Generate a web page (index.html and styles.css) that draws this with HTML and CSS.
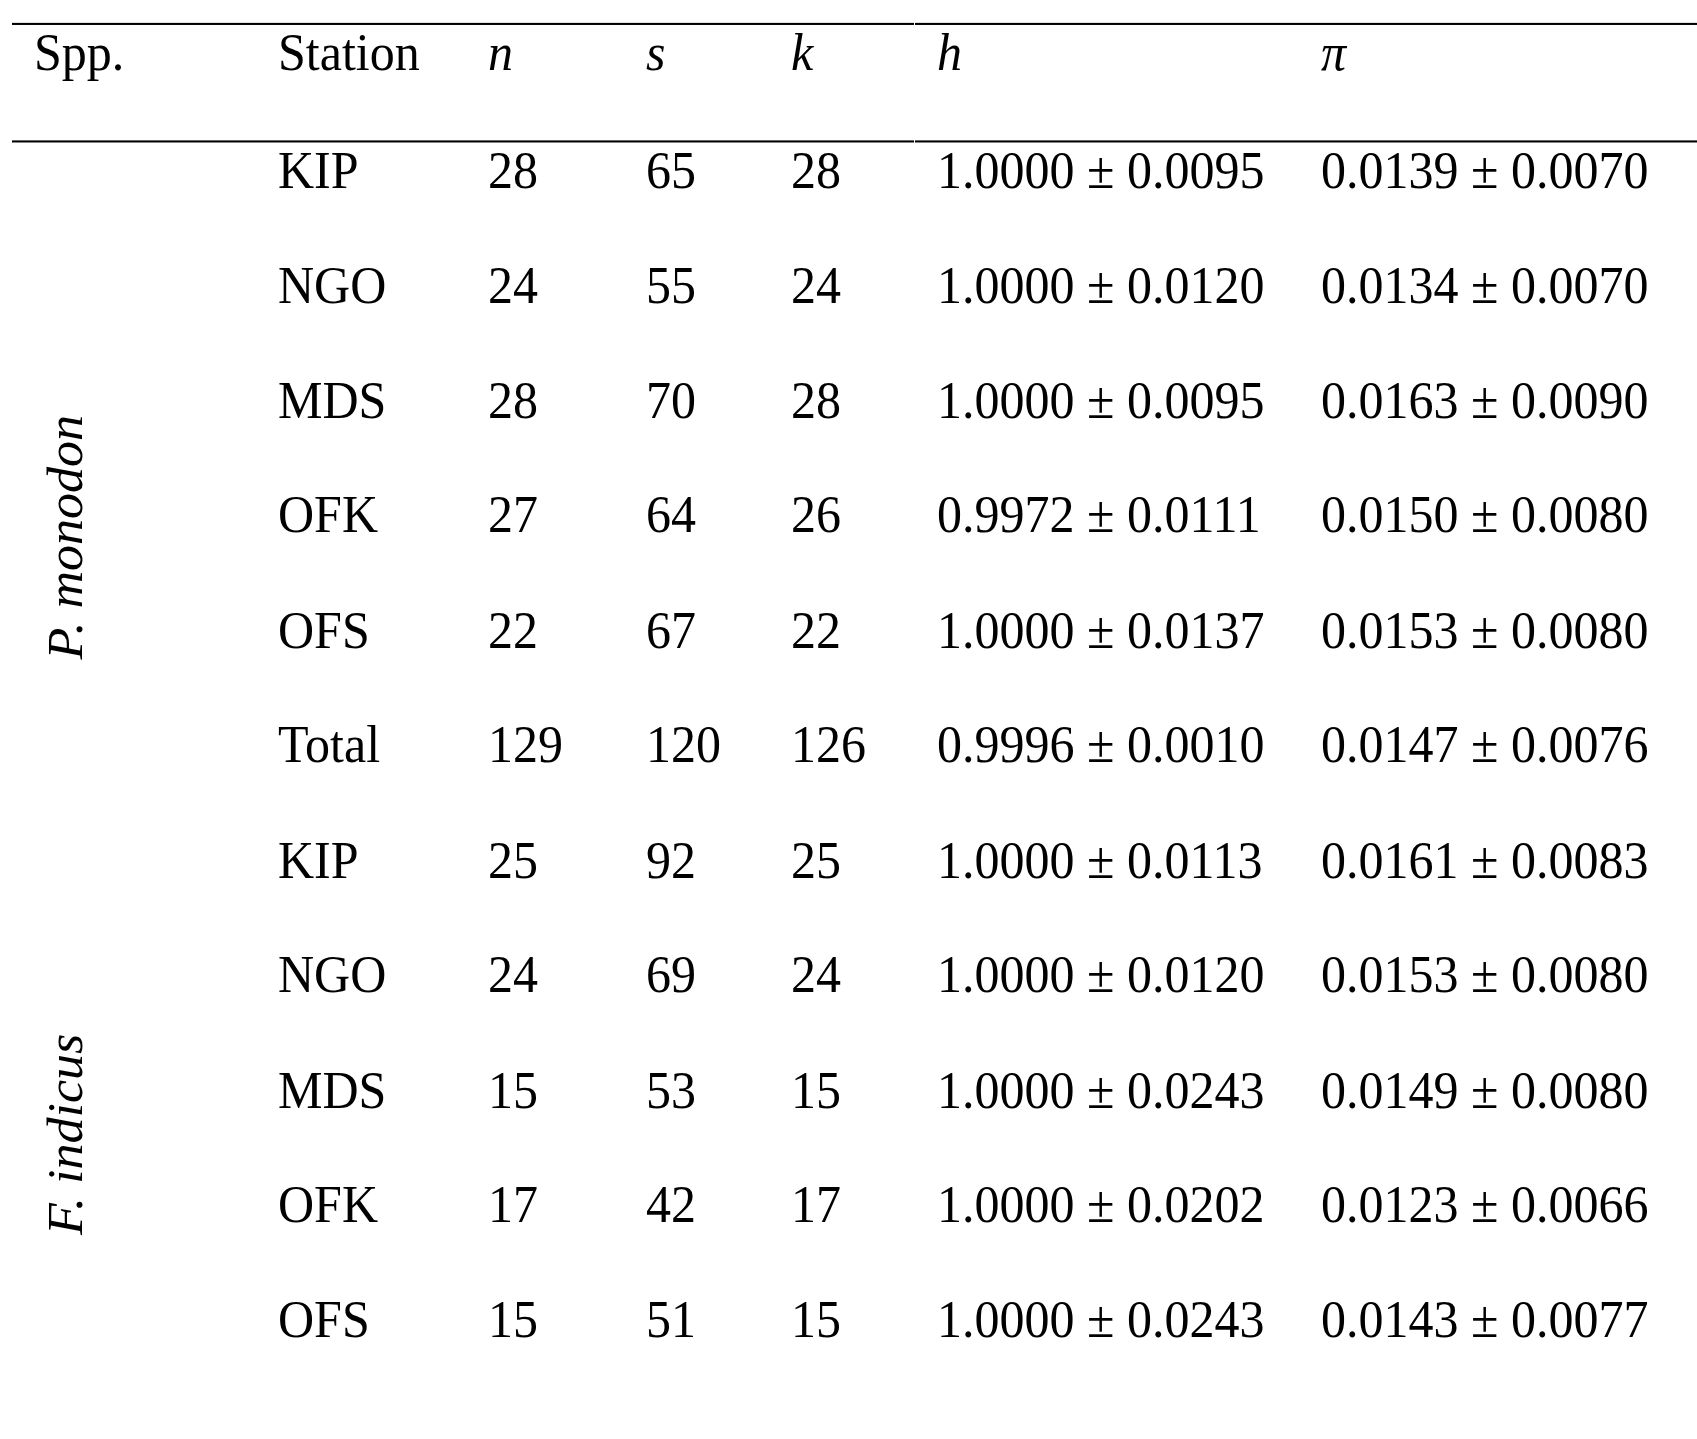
FILE: index.html
```html
<!DOCTYPE html>
<html lang="en">
<head>
<meta charset="utf-8">
<title>Genetic diversity table</title>
<link rel="stylesheet" href="styles.css">
</head>
<body>
<div class="page">
  <div class="rule"><span class="seg seg-a"></span><span class="seg seg-b"></span></div>
  <div class="grid head">
    <div class="cell">Spp.</div>
    <div class="cell">Station</div>
    <div class="cell it">n</div>
    <div class="cell it">s</div>
    <div class="cell it">k</div>
    <div class="cell it">h</div>
    <div class="cell it">π</div>
  </div>
  <div class="rule"><span class="seg seg-a"></span><span class="seg seg-b"></span></div>
  <div class="grid body">
    <div class="species sp-p">P. monodon</div>
    <div class="species sp-f">F. indicus</div>

    <div class="row"><div class="cell">KIP</div><div class="cell">28</div><div class="cell">65</div><div class="cell">28</div><div class="cell">1.0000 ± 0.0095</div><div class="cell">0.0139 ± 0.0070</div></div>
    <div class="row"><div class="cell">NGO</div><div class="cell">24</div><div class="cell">55</div><div class="cell">24</div><div class="cell">1.0000 ± 0.0120</div><div class="cell">0.0134 ± 0.0070</div></div>
    <div class="row"><div class="cell">MDS</div><div class="cell">28</div><div class="cell">70</div><div class="cell">28</div><div class="cell">1.0000 ± 0.0095</div><div class="cell">0.0163 ± 0.0090</div></div>
    <div class="row"><div class="cell">OFK</div><div class="cell">27</div><div class="cell">64</div><div class="cell">26</div><div class="cell">0.9972 ± 0.0111</div><div class="cell">0.0150 ± 0.0080</div></div>
    <div class="row"><div class="cell">OFS</div><div class="cell">22</div><div class="cell">67</div><div class="cell">22</div><div class="cell">1.0000 ± 0.0137</div><div class="cell">0.0153 ± 0.0080</div></div>
    <div class="row"><div class="cell">Total</div><div class="cell">129</div><div class="cell">120</div><div class="cell">126</div><div class="cell">0.9996 ± 0.0010</div><div class="cell">0.0147 ± 0.0076</div></div>
    <div class="row"><div class="cell">KIP</div><div class="cell">25</div><div class="cell">92</div><div class="cell">25</div><div class="cell">1.0000 ± 0.0113</div><div class="cell">0.0161 ± 0.0083</div></div>
    <div class="row"><div class="cell">NGO</div><div class="cell">24</div><div class="cell">69</div><div class="cell">24</div><div class="cell">1.0000 ± 0.0120</div><div class="cell">0.0153 ± 0.0080</div></div>
    <div class="row"><div class="cell">MDS</div><div class="cell">15</div><div class="cell">53</div><div class="cell">15</div><div class="cell">1.0000 ± 0.0243</div><div class="cell">0.0149 ± 0.0080</div></div>
    <div class="row"><div class="cell">OFK</div><div class="cell">17</div><div class="cell">42</div><div class="cell">17</div><div class="cell">1.0000 ± 0.0202</div><div class="cell">0.0123 ± 0.0066</div></div>
    <div class="row"><div class="cell">OFS</div><div class="cell">15</div><div class="cell">51</div><div class="cell">15</div><div class="cell">1.0000 ± 0.0243</div><div class="cell">0.0143 ± 0.0077</div></div>
  </div>
</div>
</body>
</html>
```

FILE: styles.css
```css
html, body {
  margin: 0;
  padding: 0;
  background: #ffffff;
}

body {
  font-family: "Liberation Serif", "Times New Roman", serif;
  font-size: 50px;
  color: #000000;
  overflow: hidden;
  width: 1697px;
  height: 1439px;
}

/* the source table is slightly stretched vertically */
.page {
  width: 1697px;
  padding-top: 22.12px;
  box-sizing: border-box;
  transform: scaleY(1.04);
  transform-origin: 0 0;
}

.rule {
  display: flex;
  gap: 1px;
  height: 1.923px;
  margin-left: 12px;
}

.seg {
  display: block;
  background: #000000;
  height: 1.923px;
}

.seg-a {
  width: 902px;
}

.seg-b {
  flex: 1;
}

.grid {
  display: grid;
  grid-template-columns: 244px 210px 158px 145px 146px 384px 1fr;
  margin-left: 34px;
}

.head {
  height: 110.58px;
}

.cell {
  line-height: 53px;
  white-space: nowrap;
}

.body .cell {
  line-height: 55px;
}

.body {
  grid-template-rows: repeat(11, 110.52px);
}

.row {
  display: contents;
}

.it {
  font-style: italic;
}

.species {
  grid-column: 1;
  font-style: italic;
  writing-mode: vertical-rl;
  text-orientation: sideways;
  transform: rotate(180deg);
  line-height: 56px;
  white-space: nowrap;
  align-self: start;
  justify-self: start;
  margin-left: 3px;
}

.sp-p {
  grid-row: 1 / span 6;
  margin-top: 262.5px;
}

.sp-f {
  grid-row: 7 / span 5;
  margin-top: 194.2px;
}
```
